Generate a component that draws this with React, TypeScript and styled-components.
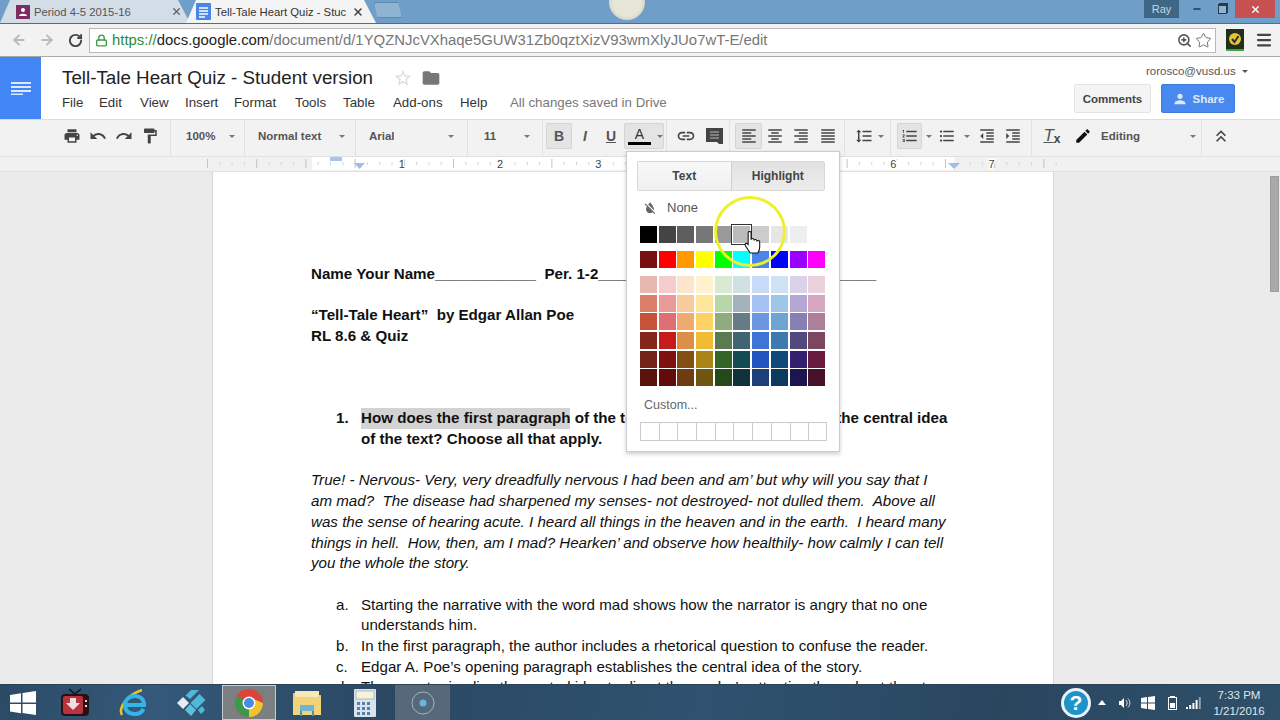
import React from "react";
import styled, { createGlobalStyle } from "styled-components";
import { ArrowLeft, ArrowRight, RotateCw, Lock, Star, ZoomIn, Menu, X, Minus } from "lucide-react";
import {
  MdPrint,
  MdUndo,
  MdRedo,
  MdFormatPaint,
  MdLink,
  MdFormatAlignLeft,
  MdFormatAlignCenter,
  MdFormatAlignRight,
  MdFormatAlignJustify,
  MdFormatLineSpacing,
  MdFormatListNumbered,
  MdFormatListBulleted,
  MdFormatIndentDecrease,
  MdFormatIndentIncrease,
  MdEdit,
  MdKeyboardDoubleArrowUp,
  MdPerson,
  MdFolder,
  MdStarBorder,
  MdFormatColorReset,
} from "react-icons/md";

const GlobalStyle = createGlobalStyle`
  html, body {
    margin: 0;
    padding: 0;
    height: 720px;
    overflow: hidden;
    font-family: "Liberation Sans", Arial, sans-serif;
  }
`;

const Frame = styled.div`
  position: relative;
  width: 1280px;
  height: 720px;
  display: flex;
  flex-direction: column;
  overflow: hidden;
  background: #ebebeb;
`;

/* window title strip */
const TabStrip = styled.div`
  height: 23px;
  flex: none;
  display: flex;
  align-items: flex-end;
  background: #6f9fc9;
  border-bottom: 1px solid #4f6f88;
`;

const Tab = styled.div<{ $active?: boolean }>`
  box-sizing: border-box;
  width: 190px;
  height: 23px;
  margin-left: ${(p) => (p.$active ? -4 : 0)}px;
  padding: 0 ${(p) => (p.$active ? 12 : 8)}px 0 ${(p) => (p.$active ? 10 : 16)}px;
  display: flex;
  align-items: center;
  gap: 4px;
  background: ${(p) => (p.$active ? "#f3f3f3" : "#d3dde7")};
  clip-path: polygon(0 100%, 10px 0, calc(100% - 12px) 0, 100% 100%);
  font-size: 11.3px;
  color: ${(p) => (p.$active ? "#333" : "#555")};
  z-index: ${(p) => (p.$active ? 1 : 0)};
`;

const TabTitle = styled.span`
  flex: 1;
  white-space: nowrap;
  overflow: hidden;
`;

const NewTab = styled.div`
  width: 28px;
  height: 16px;
  margin: 0 0 5px -2px;
  background: #8fb3d3;
  border: 1px solid #5f87a8;
  box-sizing: border-box;
  clip-path: polygon(0 0, 85% 0, 100% 100%, 12% 100%);
`;

const StripSpacer = styled.div`
  flex: 1;
`;

const UserBadge = styled.div`
  width: 35px;
  height: 18px;
  margin-bottom: 5px;
  background: #3f6684;
  color: #c9d6e0;
  font-size: 11px;
  display: flex;
  align-items: center;
  justify-content: center;
`;

const WindowButton = styled.div<{ $w: number; $close?: boolean }>`
  width: ${(p) => p.$w}px;
  height: 18px;
  margin-right: ${(p) => (p.$close ? 5 : 0)}px;
  margin-bottom: 5px;
  display: flex;
  align-items: center;
  justify-content: center;
  color: ${(p) => (p.$close ? "#fff" : "#2a3a48")};
  background: ${(p) => (p.$close ? "#c75050" : "transparent")};
`;

const RestoreIcon = styled.div`
  width: 7px;
  height: 7px;
  margin-right: 6px;
  border: 1.5px solid #2a3a48;
  border-top-width: 2.5px;
  background: #8fb3d3;
  box-shadow: 1px -1px 0 #2a3a48;
`;

const Glare = styled.div`
  position: absolute;
  left: 609px;
  top: -16px;
  width: 36px;
  height: 36px;
  border-radius: 50%;
  background: radial-gradient(circle, #e6e6d8 55%, #b5b9a8 100%);
`;

/* address bar */
const AddressRow = styled.div`
  height: 33px;
  flex: none;
  box-sizing: border-box;
  display: flex;
  align-items: center;
  background: #f2f2f2;
  border-bottom: 1px solid #a8a8a8;
  padding-left: 5px;
`;

const NavButton = styled.div`
  width: 28px;
  display: flex;
  justify-content: center;
`;

const Omnibox = styled.div`
  box-sizing: border-box;
  width: 1127px;
  height: 25px;
  padding: 0 3px 0 5px;
  display: flex;
  align-items: center;
  background: #fff;
  border: 1px solid #b9b9b9;
  font-size: 14.9px;
  color: #777;
  white-space: nowrap;
`;

const Scheme = styled.span`
  margin-left: 4px;
  color: #2e8b3a;
`;

const Host = styled.span`
  color: #222;
`;

const OmniRight = styled.div`
  margin-left: auto;
  display: flex;
  align-items: center;
  gap: 3px;
  color: #555;
`;

const ExtensionBadge = styled.div`
  width: 18px;
  height: 20px;
  margin-left: 10px;
  background: #20301c;
  border-bottom: 2px solid #3fa53f;
  display: flex;
  align-items: center;
  justify-content: center;
`;

const HamburgerSlot = styled.div`
  margin-left: 11px;
  display: flex;
  color: #444;
`;

/* docs header */
const DocHeader = styled.div`
  height: 62px;
  flex: none;
  display: flex;
  background: #fff;
`;

const DocsLogo = styled.div`
  width: 41px;
  display: flex;
  align-items: center;
  justify-content: center;
  background: #4285f4;
`;

const TitleColumn = styled.div`
  flex: 1;
  padding: 9px 0 0 21px;
`;

const TitleRow = styled.div`
  display: flex;
  align-items: center;
  height: 24px;
  margin-bottom: 5px;
`;

const DocTitle = styled.div`
  font-size: 18.8px;
  color: #222;
  width: 331px;
  white-space: nowrap;
`;

const FolderIcon = styled(MdFolder)`
  margin-left: 8px;
`;

const MenuBar = styled.div`
  display: flex;
  align-items: center;
  font-size: 13.3px;
  color: #333;
  white-space: nowrap;
`;

const MenuItem = styled.span<{ $w: number }>`
  width: ${(p) => p.$w}px;
`;

const SavedNote = styled.span`
  color: #777;
`;

const HeaderRight = styled.div`
  width: 206px;
  padding-top: 7px;
`;

const Account = styled.div`
  display: flex;
  align-items: center;
  gap: 6px;
  font-size: 11.5px;
  color: #555;
  padding-left: 72px;
  height: 14px;
  margin-bottom: 6px;
`;

const Caret = styled.span<{ $dark?: boolean }>`
  display: inline-block;
  flex: none;
  border-left: 3px solid transparent;
  border-right: 3px solid transparent;
  border-top: 3px solid ${(p) => (p.$dark ? "#555" : "#777")};
`;

const ButtonRow = styled.div`
  display: flex;
  gap: 10px;
`;

const CommentsButton = styled.div`
  box-sizing: border-box;
  width: 77px;
  height: 29px;
  display: flex;
  align-items: center;
  justify-content: center;
  background: #f4f4f4;
  border: 1px solid #e3e3e3;
  border-radius: 2px;
  font-size: 11.5px;
  font-weight: bold;
  color: #444;
`;

const ShareButton = styled(CommentsButton)`
  width: 74px;
  gap: 5px;
  background: #4889f0;
  border-color: #3f7bd9;
  color: #dfe9fb;
`;

/* formatting toolbar */
const Toolbar = styled.div`
  height: 38px;
  flex: none;
  box-sizing: border-box;
  display: flex;
  background: #f2f2f2;
  border-top: 1px solid #dcdcdc;
  border-bottom: 1px solid #e0e0e0;
`;

const ToolGroup = styled.div<{ $w: number; $pad?: number; $last?: boolean }>`
  box-sizing: border-box;
  width: ${(p) => p.$w}px;
  padding: 0 0 4px ${(p) => p.$pad ?? 0}px;
  display: flex;
  align-items: center;
  border-right: ${(p) => (p.$last ? "none" : "1px solid #e2e2e2")};
`;

const ToolButton = styled.div<{ $w?: number; $on?: boolean }>`
  box-sizing: border-box;
  flex: none;
  width: ${(p) => p.$w ?? 26}px;
  height: 26px;
  display: flex;
  align-items: center;
  justify-content: center;
  color: #444;
  background: ${(p) => (p.$on ? "#e4e4e4" : "transparent")};
  border: 1px solid ${(p) => (p.$on ? "#d4d4d4" : "transparent")};
  border-radius: 2px;
`;

const Selector = styled.div<{ $w: number }>`
  box-sizing: border-box;
  width: ${(p) => p.$w}px;
  display: flex;
  align-items: center;
  justify-content: space-between;
  font-size: 11.5px;
  font-weight: bold;
  color: #555;
  white-space: nowrap;
`;

const Letter = styled.span<{ $italic?: boolean; $under?: boolean }>`
  font-size: 14px;
  font-weight: bold;
  font-style: ${(p) => (p.$italic ? "italic" : "normal")};
  text-decoration: ${(p) => (p.$under ? "underline" : "none")};
  color: #555;
`;

const ClearMark = styled.span`
  font-size: 17px;
  font-style: italic;
  color: #555;
  text-decoration: underline;
  text-decoration-thickness: 1px;
  text-underline-offset: 1px;
`;

const ClearX = styled.span`
  display: inline-block;
  font-size: 12px;
  font-weight: bold;
  color: #444;
  transform: translate(0, 3px);
`;

const TextColorButton = styled(ToolButton)`
  gap: 6px;
  padding-left: 3px;
`;

const ColorLetter = styled.span`
  font-size: 14px;
  color: #333;
  line-height: 15px;
  border-bottom: 3px solid #000;
  width: 23px;
  text-align: center;
`;

const TinyCaret = styled.div<{ $w?: number }>`
  flex: none;
  width: ${(p) => p.$w ?? 12}px;
  display: flex;
  justify-content: center;
`;

const EditingLabel = styled.span`
  width: 89px;
  font-size: 11.5px;
  font-weight: bold;
  color: #555;
`;

/* ruler */
const RulerRow = styled.div`
  height: 14px;
  flex: none;
  display: flex;
  background: #f1f1f1;
  border-bottom: 1px solid #e0e0e0;
`;

/* document area */
const Canvas = styled.div`
  flex: 1;
  min-height: 0;
  display: flex;
  justify-content: space-between;
  overflow: hidden;
  padding-left: 212px;
  background: #ebebeb;
`;

const Page = styled.div`
  box-sizing: border-box;
  width: 842px;
  padding: 91.5px 0 0 98px;
  background: #fff;
  border-left: 1px solid #d6d6d6;
  border-right: 1px solid #d6d6d6;
  font-size: 15.15px;
  line-height: 20.7px;
  color: #111;
`;

const Line = styled.div<{ $bold?: boolean; $italic?: boolean }>`
  min-height: 20.7px;
  white-space: pre;
  font-weight: ${(p) => (p.$bold ? "bold" : "normal")};
  font-style: ${(p) => (p.$italic ? "italic" : "normal")};
`;

const ListLine = styled(Line)`
  display: flex;
  padding-left: 25px;
`;

const Marker = styled.span`
  width: 25px;
  flex: none;
`;

const Marked = styled.span`
  display: inline-block;
  background: #d3d3d3;
`;

const Scrollbar = styled.div`
  width: 9px;
  height: 116px;
  margin: 4px 1px 0 0;
  background: #a9a9a9;
  border: 1px solid #9c9c9c;
  box-sizing: border-box;
`;

/* colour popup */
const Popup = styled.div`
  position: absolute;
  left: 626px;
  top: 151px;
  box-sizing: border-box;
  width: 214px;
  height: 301px;
  padding: 9px 14px 0 10px;
  background: #fff;
  border: 1px solid #ccc;
  box-shadow: 0 2px 4px rgba(0, 0, 0, 0.2);
  z-index: 3;
`;

const PopupTabs = styled.div`
  display: flex;
  height: 28px;
  border: 1px solid #d8d8d8;
  border-radius: 2px;
`;

const PopupTab = styled.div<{ $on?: boolean }>`
  flex: 1;
  display: flex;
  align-items: center;
  justify-content: center;
  font-size: 12px;
  font-weight: bold;
  color: #444;
  background: ${(p) => (p.$on ? "linear-gradient(#e2e2e2, #ececec)" : "linear-gradient(#f8f8f8, #f0f0f0)")};
  border-left: ${(p) => (p.$on ? "1px solid #d0d0d0" : "none")};
`;

const NoneRow = styled.div`
  height: 33px;
  display: flex;
  align-items: center;
  gap: 9px;
  padding-left: 5px;
  font-size: 13px;
  color: #555;
`;

const SwatchGrid = styled.div<{ $mt: number }>`
  margin: ${(p) => p.$mt}px 0 0 3px;
  display: grid;
  grid-template-columns: repeat(10, 17px);
  grid-auto-rows: 17px;
  gap: 1.7px;
`;

const Swatch = styled.div<{ $on?: boolean }>`
  box-sizing: border-box;
  background: ${(p) => p.color};
  ${(p) => (p.$on ? "outline: 1.5px solid #333; outline-offset: 1px;" : "")}
`;

const CustomLabel = styled.div`
  margin: 12px 0 9px 7px;
  font-size: 12.5px;
  line-height: 15px;
  color: #666;
`;

const EmptyRow = styled.div`
  margin-left: 3px;
  display: grid;
  grid-template-columns: repeat(10, 18.7px);
  height: 17px;
  border-top: 1px solid #ccc;
  border-bottom: 1px solid #ccc;
  width: 187px;
`;

const EmptyCell = styled.div`
  border-left: 1px solid #ccc;
  &:last-child {
    border-right: 1px solid #ccc;
  }
`;

const CursorRing = styled.div`
  position: absolute;
  left: 714px;
  top: 196px;
  width: 72px;
  height: 71px;
  box-sizing: border-box;
  border: 3px solid #eef02a;
  border-radius: 50%;
  z-index: 4;
`;

const HandCursor = styled.svg`
  position: absolute;
  left: 744px;
  top: 231px;
  z-index: 5;
`;

/* taskbar */
const Taskbar = styled.div`
  height: 36px;
  flex: none;
  display: flex;
  align-items: center;
  background: linear-gradient(100deg, #2b4a66 0%, #34597a 12%, #2a4862 30%, #2f5270 55%, #29465f 78%, #2f5069 100%);
  border-top: 1px solid #2d4254;
  box-sizing: border-box;
  z-index: 2;
`;

const StartSlot = styled.div`
  width: 46px;
  display: flex;
  justify-content: center;
`;

const TaskSlot = styled.div`
  box-sizing: border-box;
  width: 58px;
  height: 35px;
  flex: none;
  display: flex;
  align-items: center;
  justify-content: center;
`;

const ActiveSlot = styled(TaskSlot)`
  width: 54px;
  margin: 0 2px;
  background: #7b7f82;
  border: 1px solid #c5cbd0;
`;

const OpenSlot = styled(TaskSlot)`
  width: 55px;
  margin: 0 1px;
  background: #55697a;
`;

const Tray = styled.div`
  margin-left: auto;
  display: flex;
  align-items: center;
  color: #e8eef3;
`;

const HelpBadge = styled.div`
  box-sizing: border-box;
  width: 30px;
  height: 30px;
  border-radius: 50%;
  background: #1f93c9;
  border: 3px solid #e9f3f8;
  color: #fff;
  font-size: 21px;
  font-weight: bold;
  display: flex;
  align-items: center;
  justify-content: center;
`;

const TrayIcon = styled.div<{ $w: number }>`
  width: ${(p) => p.$w}px;
  display: flex;
  justify-content: center;
`;

const Clock = styled.div`
  width: 70px;
  margin-left: 3px;
  margin-right: 6px;
  text-align: center;
  font-size: 11.5px;
  line-height: 16px;
  color: #dfe6ec;
`;

const palette = {
  grays: ["#000000", "#444444", "#5e5e5e", "#777777", "#999999", "#bbbbbb", "#cccccc", "#e6e6e6", "#eeeeee", "#ffffff"],
  bright: ["#7a0f12", "#ff0000", "#ff9900", "#ffff00", "#00ff00", "#00ffff", "#4a86e8", "#0000ff", "#9900ff", "#ff00ff"],
  shades: [
    "#e6b8af", "#f4cccc", "#fce5cd", "#fff2cc", "#d9ead3", "#d0e0e3", "#c9daf8", "#cfe2f3", "#d9d2e9", "#ead1dc",
    "#dd7e6b", "#ea9999", "#f9cb9c", "#ffe599", "#b6d7a8", "#a2b4b9", "#a4c2f4", "#9fc5e8", "#b4a7d6", "#d5a6bd",
    "#c7523a", "#df6f73", "#f0a96e", "#fdd163", "#90ac7f", "#667c84", "#6c97df", "#6ea4d4", "#8880b4", "#ad7f98",
    "#85261a", "#c71a1a", "#dc8f46", "#f0bc34", "#5a7a4f", "#3f6573", "#3f74d6", "#3d7ab0", "#514a7c", "#7e4760",
    "#752418", "#7f1010", "#844f16", "#a98417", "#346426", "#124b52", "#1f55bd", "#114a79", "#332170", "#6a1c40",
    "#5a130a", "#640a0a", "#6f3c10", "#6e5510", "#234a18", "#0f3339", "#1c4078", "#0b3a60", "#1c1550", "#47112b",
  ],
};

const menus: [string, number][] = [
  ["File", 37],
  ["Edit", 41],
  ["View", 45],
  ["Insert", 49],
  ["Format", 61],
  ["Tools", 48],
  ["Table", 50],
  ["Add-ons", 67],
  ["Help", 50],
];

const Ruler: React.FC = () => {
  const ticks = [];
  for (let x = 207; x < 1056; x += 12.3) ticks.push(x);
  const labels = [1, 2, 3, 4, 5, 6, 7];
  return (
    <svg width="1280" height="13" viewBox="0 0 1280 13">
      <rect x="312" y="0" width="642" height="13" fill="#fff" />
      {ticks.map((x, i) => (
        <rect key={i} x={x} y={i % 4 === 0 ? 2 : 5} width="1" height={i % 4 === 0 ? 9 : 3} fill={i % 4 === 0 ? "#c4c4c4" : "#d4d4d4"} />
      ))}
      {labels.map((n) => (
        <text key={n} x={303.5 + n * 98.3} y="10.5" fontSize="11" fill="#444" textAnchor="middle" stroke="#fff" strokeWidth="3" paintOrder="stroke" fontFamily="Liberation Sans">
          {n}
        </text>
      ))}
      <rect x="330" y="0" width="12" height="4" fill="#a9c4e8" />
      <path d="M354 6h11l-5.500 6z" fill="#9fbde6" />
      <path d="M948 6h12l-6 6z" fill="#9fbde6" />
    </svg>
  );
};

const ChromeLogo: React.FC = () => (
  <svg width="30" height="30" viewBox="0 0 30 30">
    <circle cx="15" cy="15" r="14" fill="#db4437" />
    <path d="M15 15 L2.900 8 A14 14 0 0 0 8 27.100 Z" fill="#3a9a4b" />
    <path d="M15 15 L8 27.100 A14 14 0 0 0 29 15 Z" fill="#3a9a4b" />
    <path d="M15 15 L15 29 A14 14 0 0 0 29 15 L15 9 Z" fill="#f2c230" />
    <circle cx="15" cy="15" r="6.500" fill="#fff" />
    <circle cx="15" cy="15" r="5" fill="#4a8be0" />
  </svg>
);

const App: React.FC = () => (
  <Frame>
    <GlobalStyle />
    <TabStrip>
      <Tab>
        <svg width="14" height="14" viewBox="0 0 14 14">
          <rect width="14" height="14" fill="#7d2d63" />
          <circle cx="7" cy="5" r="2" fill="#fff" />
          <path d="M3 11c0-3 8-3 8 0z" fill="#fff" />
        </svg>
        <TabTitle>Period 4-5 2015-16</TabTitle>
        <X size={11} strokeWidth={3} color="#666" />
      </Tab>
      <Tab $active>
        <svg width="15" height="17" viewBox="0 0 15 17">
          <rect width="15" height="17" rx="1" fill="#4a86e8" />
          <path d="M3 5h9M3 8h9M3 11h9M3 14h6" stroke="#fff" strokeWidth="1.400" />
        </svg>
        <TabTitle>Tell-Tale Heart Quiz - Stuc</TabTitle>
        <X size={12} strokeWidth={3} color="#444" />
      </Tab>
      <NewTab />
      <StripSpacer />
      <UserBadge>Ray</UserBadge>
      <WindowButton $w={36}>
        <Minus size={10} strokeWidth={4} />
      </WindowButton>
      <WindowButton $w={20}>
        <RestoreIcon />
      </WindowButton>
      <WindowButton $w={40} $close>
        <X size={11} strokeWidth={3} />
      </WindowButton>
    </TabStrip>
    <Glare />
    <AddressRow>
      <NavButton>
        <ArrowLeft size={16} strokeWidth={3} color="#bbb" />
      </NavButton>
      <NavButton>
        <ArrowRight size={16} strokeWidth={3} color="#bbb" />
      </NavButton>
      <NavButton>
        <RotateCw size={15} strokeWidth={3} color="#444" />
      </NavButton>
      <Omnibox>
        <Lock size={13} strokeWidth={2.5} color="#3f9a45" />
        <Scheme>https://</Scheme>
        <Host>docs.google.com</Host>/document/d/1YQZNJcVXhaqe5GUW31Zb0qztXizV93wmXlyJUo7wT-E/edit
        <OmniRight>
          <ZoomIn size={15} strokeWidth={2.5} />
          <Star size={17} strokeWidth={1.3} color="#666" />
        </OmniRight>
      </Omnibox>
      <ExtensionBadge>
        <svg width="14" height="14" viewBox="0 0 14 14">
          <circle cx="7" cy="7" r="6" fill="#e6c533" />
          <path d="M4 7l2.500 3 4-6" stroke="#333" strokeWidth="2" fill="none" />
        </svg>
      </ExtensionBadge>
      <HamburgerSlot>
        <Menu size={18} strokeWidth={3} />
      </HamburgerSlot>
    </AddressRow>
    <DocHeader>
      <DocsLogo>
        <svg width="20" height="13" viewBox="0 0 20 13">
          <path d="M0 1h20M0 5h20M0 9h20M0 12.500h12" stroke="#dce8fd" strokeWidth="2" />
        </svg>
      </DocsLogo>
      <TitleColumn>
        <TitleRow>
          <DocTitle>Tell-Tale Heart Quiz - Student version</DocTitle>
          <MdStarBorder size={20} color="#ddd" />
          <FolderIcon size={20} color="#777" />
        </TitleRow>
        <MenuBar>
          {menus.map(([label, w]) => (
            <MenuItem key={label} $w={w}>
              {label}
            </MenuItem>
          ))}
          <SavedNote>All changes saved in Drive</SavedNote>
        </MenuBar>
      </TitleColumn>
      <HeaderRight>
        <Account>
          rorosco@vusd.us <Caret $dark />
        </Account>
        <ButtonRow>
          <CommentsButton>Comments</CommentsButton>
          <ShareButton>
            <MdPerson size={16} color="#dfe9fb" />
            Share
          </ShareButton>
        </ButtonRow>
      </HeaderRight>
    </DocHeader>
    <Toolbar>
      <ToolGroup $w={171} $pad={59}>
        <ToolButton><MdPrint size={18} /></ToolButton>
        <ToolButton><MdUndo size={18} /></ToolButton>
        <ToolButton><MdRedo size={18} /></ToolButton>
        <ToolButton><MdFormatPaint size={18} /></ToolButton>
      </ToolGroup>
      <ToolGroup $w={74} $pad={15}>
        <Selector $w={49}>100% <Caret /></Selector>
      </ToolGroup>
      <ToolGroup $w={111} $pad={13}>
        <Selector $w={87}>Normal text <Caret /></Selector>
      </ToolGroup>
      <ToolGroup $w={112} $pad={13}>
        <Selector $w={85}>Arial <Caret /></Selector>
      </ToolGroup>
      <ToolGroup $w={75} $pad={16}>
        <Selector $w={46}>11 <Caret /></Selector>
      </ToolGroup>
      <ToolGroup $w={124} $pad={3}>
        <ToolButton $w={26} $on><Letter>B</Letter></ToolButton>
        <ToolButton $w={26}><Letter $italic>I</Letter></ToolButton>
        <ToolButton $w={26}><Letter $under>U</Letter></ToolButton>
        <TextColorButton $w={40} $on>
          <ColorLetter>A</ColorLetter>
          <Caret />
        </TextColorButton>
      </ToolGroup>
      <ToolGroup $w={63} $pad={5}>
        <ToolButton $w={28}><MdLink size={20} /></ToolButton>
        <ToolButton $w={28}>
          <svg width="17" height="16" viewBox="0 0 17 16">
            <path d="M0 0h17v16h-4l-2-2H0z" fill="#444" />
            <path d="M4 4h9M4 7h9M4 10h9" stroke="#bbb" strokeWidth="1" />
          </svg>
        </ToolButton>
      </ToolGroup>
      <ToolGroup $w={115} $pad={5}>
        <ToolButton $w={27} $on><MdFormatAlignLeft size={18} /></ToolButton>
        <ToolButton $w={26}><MdFormatAlignCenter size={18} /></ToolButton>
        <ToolButton $w={26}><MdFormatAlignRight size={18} /></ToolButton>
        <ToolButton $w={27}><MdFormatAlignJustify size={18} /></ToolButton>
      </ToolGroup>
      <ToolGroup $w={46} $pad={6}>
        <ToolButton $w={26}><MdFormatLineSpacing size={18} /></ToolButton>
        <TinyCaret $w={8}><Caret /></TinyCaret>
      </ToolGroup>
      <ToolGroup $w={141} $pad={6}>
        <ToolButton $w={25} $on><MdFormatListNumbered size={18} /></ToolButton>
        <TinyCaret $w={14}><Caret /></TinyCaret>
        <ToolButton $w={22}><MdFormatListBulleted size={18} /></ToolButton>
        <TinyCaret $w={17}><Caret /></TinyCaret>
        <ToolButton $w={24}><MdFormatIndentDecrease size={18} /></ToolButton>
        <ToolButton $w={28}><MdFormatIndentIncrease size={18} /></ToolButton>
      </ToolGroup>
      <ToolGroup $w={170} $pad={7}>
        <ToolButton $w={26}>
          <ClearMark>T</ClearMark>
          <ClearX>x</ClearX>
        </ToolButton>
        <ToolButton $w={36}><MdEdit size={18} color="#111" /></ToolButton>
        <EditingLabel>Editing</EditingLabel>
        <Caret />
      </ToolGroup>
      <ToolGroup $w={78} $pad={6} $last>
        <ToolButton $w={26}><MdKeyboardDoubleArrowUp size={20} /></ToolButton>
      </ToolGroup>
    </Toolbar>
    <RulerRow>
      <Ruler />
    </RulerRow>
    <Canvas>
      <Page>
        <Line $bold>{"Name Your Name____________  Per. 1-2" + "_".repeat(33)}</Line>
        <Line />
        <Line $bold>{"“Tell-Tale Heart”  by Edgar Allan Poe"}</Line>
        <Line $bold>RL 8.6 &amp; Quiz</Line>
        <Line />
        <Line />
        <Line />
        <ListLine $bold>
          <Marker>1.</Marker>
          <span>
            <Marked>How does the first paragraph</Marked>
            {" of the text contribute to developing  the central idea"}
          </span>
        </ListLine>
        <ListLine $bold>
          <Marker />
          of the text? Choose all that apply.
        </ListLine>
        <Line />
        <Line $italic>True! - Nervous- Very, very dreadfully nervous I had been and am’ but why will you say that I</Line>
        <Line $italic>{"am mad?  The disease had sharpened my senses- not destroyed- not dulled them.  Above all"}</Line>
        <Line $italic>{"was the sense of hearing acute. I heard all things in the heaven and in the earth.  I heard many"}</Line>
        <Line $italic>{"things in hell.  How, then, am I mad? Hearken’ and observe how healthily- how calmly I can tell"}</Line>
        <Line $italic>you the whole the story.</Line>
        <Line />
        <ListLine>
          <Marker>a.</Marker>
          Starting the narrative with the word mad shows how the narrator is angry that no one
        </ListLine>
        <ListLine>
          <Marker />
          understands him.
        </ListLine>
        <ListLine>
          <Marker>b.</Marker>
          In the first paragraph, the author includes a rhetorical question to confuse the reader.
        </ListLine>
        <ListLine>
          <Marker>c.</Marker>
          Edgar A. Poe’s opening paragraph establishes the central idea of the story.
        </ListLine>
        <ListLine>
          <Marker>d.</Marker>
          The narrator implies the central idea to direct the reader’s attention throughout the story.
        </ListLine>
      </Page>
      <Scrollbar />
    </Canvas>
    <Taskbar>
      <StartSlot>
        <svg width="26" height="24" viewBox="0 0 26 24">
          <path d="M0 4l11-1.700v9.200H0zM12.500 2l13.500-2v11.500H12.500zM0 13h11v9.200L0 20.500zM12.500 13H26v11l-13.500-2z" fill="#fff" />
        </svg>
      </StartSlot>
      <TaskSlot>
        <svg width="30" height="30" viewBox="0 0 30 30">
          <path d="M9 1l6 5 6-5" stroke="#111" strokeWidth="1.500" fill="none" />
          <rect x="1" y="6" width="28" height="22" rx="4" fill="#2a1012" />
          <rect x="3" y="8" width="20" height="18" rx="2" fill="#b5343d" />
          <path d="M10 10h6v5h4l-7 7-7-7h4z" fill="#f3dede" />
          <rect x="25" y="12" width="2" height="2" fill="#ddd" />
          <rect x="25" y="17" width="2" height="2" fill="#ddd" />
        </svg>
      </TaskSlot>
      <TaskSlot>
        <svg width="30" height="30" viewBox="0 0 30 30">
          <path d="M4 27C0 20 9 7 24 2" stroke="#e7c52b" strokeWidth="2.500" fill="none" />
          <path d="M8 17h18c0-6-4-9-9-9-6 0-10 4-10 9 0 6 4 9 10 9 4 0 7-2 8.500-5" stroke="#35b4e8" strokeWidth="4" fill="none" />
        </svg>
      </TaskSlot>
      <TaskSlot>
        <svg width="30" height="30" viewBox="0 0 30 30">
          <path d="M1 15l6-6 6 6-6 6z" fill="#e4eef2" />
          <path d="M9.500 7.500L15 2l8 0-9 9zM14.500 15l9-9 6 6-9 9z" fill="#4fb7d8" />
          <path d="M14 16l6 6-5 6-6-6z" fill="#5cc0de" />
          <path d="M22 22l4-4 3 4-4 4z" fill="#4fb7d8" />
        </svg>
      </TaskSlot>
      <ActiveSlot>
        <ChromeLogo />
      </ActiveSlot>
      <TaskSlot>
        <svg width="30" height="28" viewBox="0 0 30 28">
          <path d="M1 4h10l2 2h16v20H1z" fill="#e8c86a" />
          <rect x="3" y="2" width="24" height="6" fill="#f6e9b5" />
          <rect x="1" y="8" width="28" height="18" fill="#f2d37a" />
          <rect x="8" y="16" width="14" height="6" fill="#6cb4d8" />
          <path d="M9 22v5M21 22v5" stroke="#4a8fb5" strokeWidth="2" />
        </svg>
      </TaskSlot>
      <TaskSlot>
        <svg width="22" height="28" viewBox="0 0 22 28">
          <rect width="22" height="28" rx="1" fill="#d8e3ee" />
          <rect x="2" y="2" width="18" height="8" fill="#f4f1dc" stroke="#7a8a99" strokeWidth="0.500" />
          <path d="M3 13h3v3H3zM8 13h3v3H8zM13 13h3v3h-3zM3 18h3v3H3zM8 18h3v3H8zM13 18h3v3h-3zM3 23h3v3H3zM8 23h3v3H8zM13 23h3v3h-3z" fill="#5a7fa8" />
        </svg>
      </TaskSlot>
      <OpenSlot>
        <svg width="24" height="24" viewBox="0 0 24 24">
          <circle cx="12" cy="12" r="11" fill="none" stroke="#9db3c4" strokeWidth="1" />
          <circle cx="12" cy="12" r="3.500" fill="#69b3e0" />
        </svg>
      </OpenSlot>
      <Tray>
        <HelpBadge>?</HelpBadge>
        <TrayIcon $w={22}>
          <svg width="8" height="5" viewBox="0 0 8 5"><path d="M0 5l4-5 4 5z" fill="#fff" /></svg>
        </TrayIcon>
        <TrayIcon $w={24}>
          <svg width="14" height="14" viewBox="0 0 14 14">
            <path d="M1 5h2l3-3v10l-3-3H1z" fill="#fff" />
            <path d="M8 4c1.500 2 1.500 4 0 6M10 2.500c2.500 3 2.500 6 0 9" stroke="#dde" fill="none" />
          </svg>
        </TrayIcon>
        <TrayIcon $w={22}>
          <svg width="14" height="14" viewBox="0 0 14 14">
            <path d="M0 2l6-1v5.500H0zM7 1l7-1v6.500H7zM0 7.500h6V13l-6-1zM7 7.500h7V14l-7-1z" fill="#fff" />
          </svg>
        </TrayIcon>
        <TrayIcon $w={26}>
          <svg width="9" height="14" viewBox="0 0 9 14">
            <rect x="0.500" y="1.500" width="8" height="12" fill="none" stroke="#fff" />
            <rect x="2" y="0" width="5" height="2" fill="#fff" />
            <rect x="2" y="7" width="5" height="5" fill="#fff" />
          </svg>
        </TrayIcon>
        <TrayIcon $w={16}>
          <svg width="15" height="12" viewBox="0 0 15 12">
            <path d="M0 10h2v2H0zM3.200 8h2v4h-2zM6.400 6h2v6h-2zM9.600 3h2v9h-2z" fill="#fff" />
            <rect x="12.800" y="0" width="2" height="12" fill="#8fa0ad" />
          </svg>
        </TrayIcon>
        <Clock>
          7:33 PM
          <br />
          1/21/2016
        </Clock>
      </Tray>
    </Taskbar>
    <Popup>
      <PopupTabs>
        <PopupTab>Text</PopupTab>
        <PopupTab $on>Highlight</PopupTab>
      </PopupTabs>
      <NoneRow>
        <MdFormatColorReset size={16} color="#666" />
        None
      </NoneRow>
      <SwatchGrid $mt={2}>
        {palette.grays.map((c, i) => (
          <Swatch key={c} color={c} $on={i === 5} />
        ))}
      </SwatchGrid>
      <SwatchGrid $mt={8}>
        {palette.bright.map((c) => (
          <Swatch key={c} color={c} />
        ))}
      </SwatchGrid>
      <SwatchGrid $mt={8}>
        {palette.shades.map((c) => (
          <Swatch key={c} color={c} />
        ))}
      </SwatchGrid>
      <CustomLabel>Custom...</CustomLabel>
      <EmptyRow>
        {Array.from({ length: 10 }, (_, i) => (
          <EmptyCell key={i} />
        ))}
      </EmptyRow>
    </Popup>
    <CursorRing />
    <HandCursor width="17" height="24" viewBox="0 0 17 25">
      <path
        d="M4 2c0-2 3-2 3 0v7c0-1.500 3-1.500 3 0v1c0-1.500 3-1.500 3 0v1c0-1.500 3-1.500 3 0v6c0 3-1 4-2 6H6c-1-2-4-6-5-8-1-2 1-3 3-1z"
        fill="#fff"
        stroke="#111"
        strokeWidth="1.100"
      />
    </HandCursor>
  </Frame>
);

export default App;
